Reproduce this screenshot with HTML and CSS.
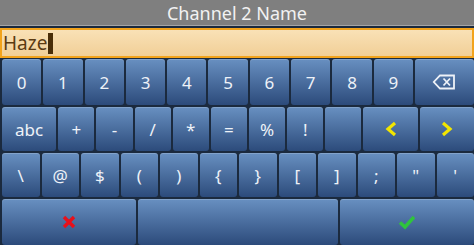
FILE: index.html
```html
<!DOCTYPE html>
<html lang="en">
<head>
    <meta charset="UTF-8">
    <meta name="viewport" content="width=device-width, initial-scale=1.0">
    <title>Channel 2 Name</title>
    <link rel="stylesheet" href="styles.css">
</head>
<body>
    <div class="screen">
        <div class="title">Channel 2 Name</div>

        <div class="entry">
            <span class="entry-text">Haze</span><span class="cursor"></span>
        </div>

        <div class="keyboard">
            <div class="row row-top">
                <span class="key">0</span>
                <span class="key">1</span>
                <span class="key">2</span>
                <span class="key">3</span>
                <span class="key">4</span>
                <span class="key">5</span>
                <span class="key">6</span>
                <span class="key">7</span>
                <span class="key">8</span>
                <span class="key">9</span>
                <span class="key wide">
                    <svg width="24" height="16" viewBox="0 0 24 16">
                        <path d="M8 1.5 H22 V14.5 H8 L1.8 8 Z" fill="none" stroke="#eef2f8" stroke-width="1.8" stroke-linejoin="miter"/>
                        <path d="M11.5 4.5 L18 11.5 M18 4.5 L11.5 11.5" stroke="#eef2f8" stroke-width="1.8"/>
                    </svg>
                </span>
            </div>

            <div class="row">
                <span class="key wide">abc</span>
                <span class="key">+</span>
                <span class="key">-</span>
                <span class="key">/</span>
                <span class="key">*</span>
                <span class="key">=</span>
                <span class="key">%</span>
                <span class="key">!</span>
                <span class="key"></span>
                <span class="key wide">
                    <svg width="14" height="16" viewBox="0 0 14 16">
                        <path d="M11 2 L4 8 L11 14" fill="none" stroke="#f2e600" stroke-width="3.2"/>
                    </svg>
                </span>
                <span class="key wide">
                    <svg width="14" height="16" viewBox="0 0 14 16">
                        <path d="M3 2 L10 8 L3 14" fill="none" stroke="#f2e600" stroke-width="3.2"/>
                    </svg>
                </span>
            </div>

            <div class="row">
                <span class="key">\</span>
                <span class="key">@</span>
                <span class="key">$</span>
                <span class="key">(</span>
                <span class="key">)</span>
                <span class="key">{</span>
                <span class="key">}</span>
                <span class="key">[</span>
                <span class="key">]</span>
                <span class="key">;</span>
                <span class="key">"</span>
                <span class="key">'</span>
            </div>

            <div class="row row-bottom">
                <span class="key double">
                    <svg width="14" height="14" viewBox="0 0 14 14">
                        <path d="M2 2 L12 12 M12 2 L2 12" stroke="#e8101a" stroke-width="3.4"/>
                    </svg>
                </span>
                <span class="key triple"></span>
                <span class="key double">
                    <svg width="18" height="16" viewBox="0 0 18 16">
                        <path d="M2 8.5 L7 13 L16 3" fill="none" stroke="#2fc43c" stroke-width="3.4"/>
                    </svg>
                </span>
            </div>
        </div>
    </div>
</body>
</html>
```

FILE: styles.css
```css
body {
    margin: 0;
    padding: 0;
    background-color: #1b2a3e;
    font-family: "Noto Sans", "Open Sans", sans-serif;
}
.screen {
    width: 474px;
    height: 245px;
    overflow: hidden;
    display: flex;
    flex-direction: column;
}
.title {
    height: 26px;
    line-height: 26px;
    background-color: #7f7f7f;
    border-bottom: 1px solid #a6a6a6;
    color: #f2f2f2;
    font-size: 18px;
    text-align: center;
    box-sizing: border-box;
}
.entry {
    margin-top: 2px;
    height: 30px;
    box-sizing: border-box;
    border: 2px solid #f2a31c;
    background: linear-gradient(#f9e1b6, #f1cf97);
    display: flex;
    align-items: center;
    padding-left: 1px;
}
.entry-text {
    color: #5b3b12;
    font-size: 19px;
    line-height: 22px;
}
.cursor {
    display: inline-block;
    width: 5px;
    height: 21px;
    margin-left: 1px;
    background-color: #4a2e08;
}
.keyboard {
    flex: 1;
    display: flex;
    flex-direction: column;
    gap: 2px;
    padding: 1px 0 0 2px;
}
.row {
    display: flex;
    gap: 2px;
    height: 44px;
}
.row-top {
    height: 46px;
}
.row-bottom {
    flex: 1;
}
.key {
    flex: 2;
    display: flex;
    align-items: center;
    justify-content: center;
    border-radius: 3px;
    background: linear-gradient(#6890c1, #2c4b7b);
    box-shadow: inset 0 1px 0 rgba(255, 255, 255, 0.18);
    color: #eef2f8;
    font-size: 17px;
}
.key.wide {
    flex: 3;
}
.key.double {
    flex: 4;
}
.key.triple {
    flex: 6;
}
```
